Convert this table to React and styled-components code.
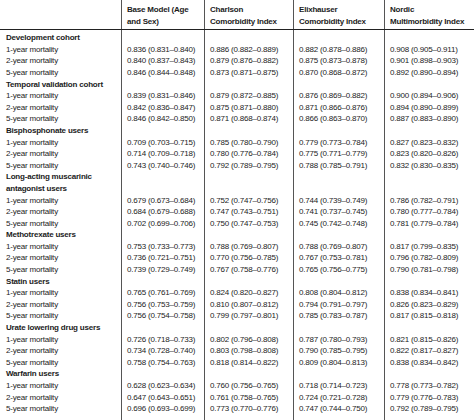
import React from "react";
import styled, { createGlobalStyle } from "styled-components";

const Global = createGlobalStyle`
  html, body { margin: 0; padding: 0; background: #fff; }
  body {
    font-family: "Liberation Sans", Arial, sans-serif;
    color: #1c1c1c;
    width: 474px;
    height: 420px;
    overflow: hidden;
  }
`;

const COLS = "121px 83px 89px 91px 90px";

const Table = styled.div`
  display: flex;
  flex-direction: column;
  width: 474px;
  font-size: 8px;
  letter-spacing: -0.2px;
`;

const HeadRow = styled.div`
  display: grid;
  grid-template-columns: ${COLS};
  height: 30px;
  box-sizing: border-box;
  border-bottom: 1px solid #222;
`;

const HeadCell = styled.div`
  font-weight: 700;
  line-height: 12px;
  white-space: nowrap;
  padding: 4px 0 0 ${(p) => (p.$first ? "6px" : "5px")};
  border-left: ${(p) => (p.$first ? "none" : "1px solid #555")};
`;

const Body = styled.div`
  display: flex;
  flex-direction: column;
`;

const Row = styled.div`
  display: grid;
  grid-template-columns: ${COLS};
  height: ${(p) => p.$lines * 11.6 + (p.$pad || 0)}px;
`;

const Cell = styled.div`
  line-height: 11.6px;
  white-space: nowrap;
  padding: ${(p) => p.$pad || 0}px 0 0 ${(p) => (p.$first ? "6px" : "5px")};
  font-weight: ${(p) => (p.$bold ? 700 : 400)};
  border-left: ${(p) => (p.$first ? "none" : "1px solid #555")};
`;

const GroupLabel = styled.span`
  display: block;
  font-weight: 700;
`;

const groups = [
  {
    name: ["Development cohort"],
    rows: [
      ["0.836 (0.831–0.840)", "0.886 (0.882–0.889)", "0.882 (0.878–0.886)", "0.908 (0.905–0.911)"],
      ["0.840 (0.837–0.843)", "0.879 (0.876–0.882)", "0.875 (0.873–0.878)", "0.901 (0.898–0.903)"],
      ["0.846 (0.844–0.848)", "0.873 (0.871–0.875)", "0.870 (0.868–0.872)", "0.892 (0.890–0.894)"],
    ],
  },
  {
    name: ["Temporal validation cohort"],
    rows: [
      ["0.839 (0.831–0.846)", "0.879 (0.872–0.885)", "0.876 (0.869–0.882)", "0.900 (0.894–0.906)"],
      ["0.842 (0.836–0.847)", "0.875 (0.871–0.880)", "0.871 (0.866–0.876)", "0.894 (0.890–0.899)"],
      ["0.846 (0.842–0.850)", "0.871 (0.868–0.874)", "0.866 (0.863–0.870)", "0.887 (0.883–0.890)"],
    ],
  },
  {
    name: ["Bisphosphonate users"],
    rows: [
      ["0.709 (0.703–0.715)", "0.785 (0.780–0.790)", "0.779 (0.773–0.784)", "0.827 (0.823–0.832)"],
      ["0.714 (0.709–0.718)", "0.780 (0.776–0.784)", "0.775 (0.771–0.779)", "0.823 (0.820–0.826)"],
      ["0.743 (0.740–0.746)", "0.792 (0.789–0.795)", "0.788 (0.785–0.791)", "0.832 (0.830–0.835)"],
    ],
  },
  {
    name: ["Long-acting muscarinic", "antagonist users"],
    rows: [
      ["0.679 (0.673–0.684)", "0.752 (0.747–0.756)", "0.744 (0.739–0.749)", "0.786 (0.782–0.791)"],
      ["0.684 (0.679–0.688)", "0.747 (0.743–0.751)", "0.741 (0.737–0.745)", "0.780 (0.777–0.784)"],
      ["0.702 (0.699–0.706)", "0.750 (0.747–0.753)", "0.745 (0.742–0.748)", "0.781 (0.779–0.784)"],
    ],
  },
  {
    name: ["Methotrexate users"],
    rows: [
      ["0.753 (0.733–0.773)", "0.788 (0.769–0.807)", "0.788 (0.769–0.807)", "0.817 (0.799–0.835)"],
      ["0.736 (0.721–0.751)", "0.770 (0.756–0.785)", "0.767 (0.753–0.781)", "0.796 (0.782–0.809)"],
      ["0.739 (0.729–0.749)", "0.767 (0.758–0.776)", "0.765 (0.756–0.775)", "0.790 (0.781–0.798)"],
    ],
  },
  {
    name: ["Statin users"],
    rows: [
      ["0.765 (0.761–0.769)", "0.824 (0.820–0.827)", "0.808 (0.804–0.812)", "0.838 (0.834–0.841)"],
      ["0.756 (0.753–0.759)", "0.810 (0.807–0.812)", "0.794 (0.791–0.797)", "0.826 (0.823–0.829)"],
      ["0.756 (0.754–0.758)", "0.799 (0.797–0.801)", "0.785 (0.783–0.787)", "0.817 (0.815–0.818)"],
    ],
  },
  {
    name: ["Urate lowering drug users"],
    rows: [
      ["0.726 (0.718–0.733)", "0.802 (0.796–0.808)", "0.787 (0.780–0.793)", "0.821 (0.815–0.826)"],
      ["0.734 (0.728–0.740)", "0.803 (0.798–0.808)", "0.790 (0.785–0.795)", "0.822 (0.817–0.827)"],
      ["0.758 (0.754–0.763)", "0.818 (0.814–0.822)", "0.809 (0.804–0.813)", "0.838 (0.834–0.842)"],
    ],
  },
  {
    name: ["Warfarin users"],
    rows: [
      ["0.628 (0.623–0.634)", "0.760 (0.756–0.765)", "0.718 (0.714–0.723)", "0.778 (0.773–0.782)"],
      ["0.647 (0.643–0.651)", "0.761 (0.758–0.765)", "0.724 (0.721–0.728)", "0.779 (0.776–0.783)"],
      ["0.696 (0.693–0.699)", "0.773 (0.770–0.776)", "0.747 (0.744–0.750)", "0.792 (0.789–0.795)"],
    ],
  },
];

const labels = ["1-year mortality", "2-year mortality", "5-year mortality"];

export default function App() {
  return (
    <>
      <Global />
      <Table>
        <HeadRow>
          <HeadCell $first />
          <HeadCell>Base Model (Age<br />and Sex)</HeadCell>
          <HeadCell>Charlson<br />Comorbidity Index</HeadCell>
          <HeadCell>Elixhauser<br />Comorbidity Index</HeadCell>
          <HeadCell>Nordic<br />Multimorbidity Index</HeadCell>
        </HeadRow>
        <Body>
          {groups.map((g, gi) => {
            const pad = gi === 0 ? 2.2 : 0;
            return (
              <React.Fragment key={gi}>
                <Row $lines={g.name.length} $pad={pad}>
                  <Cell $first $pad={pad}>
                    {g.name.map((n) => (
                      <GroupLabel key={n}>{n}</GroupLabel>
                    ))}
                  </Cell>
                  <Cell $pad={pad} />
                  <Cell $pad={pad} />
                  <Cell $pad={pad} />
                  <Cell $pad={pad} />
                </Row>
                {g.rows.map((r, ri) => (
                  <Row key={ri} $lines={1}>
                    <Cell $first>{labels[ri]}</Cell>
                    {r.map((v, vi) => (
                      <Cell key={vi}>{v}</Cell>
                    ))}
                  </Row>
                ))}
              </React.Fragment>
            );
          })}
          <Row $lines={1}>
            <Cell $first />
            <Cell />
            <Cell />
            <Cell />
            <Cell />
          </Row>
        </Body>
      </Table>
    </>
  );
}
